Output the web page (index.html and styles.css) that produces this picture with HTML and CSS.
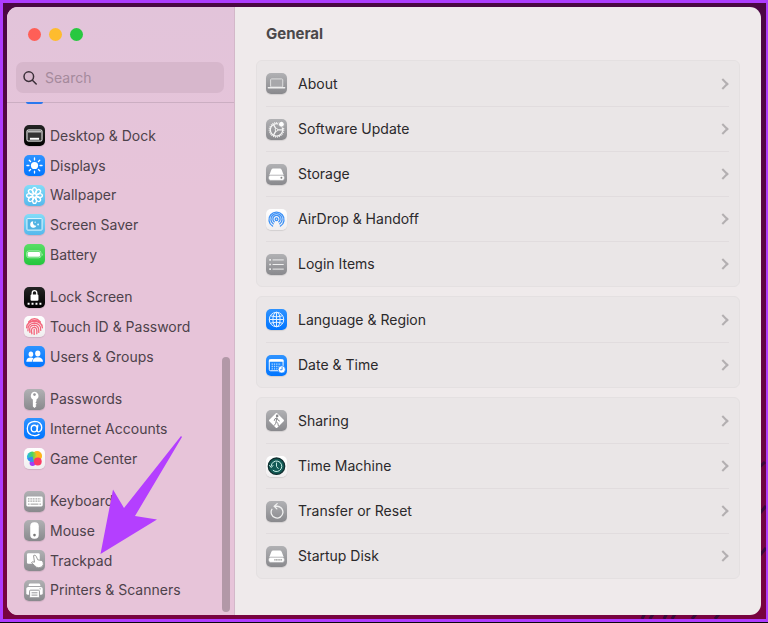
FILE: index.html
```html
<!DOCTYPE html>
<html lang="en">
    <head>
        <meta charset="utf-8">
        <title>General</title>
        <link rel="stylesheet" href="styles.css">
    </head>
    <body>
        <div class="desktop">
            <svg class="streaks" width="140" height="160" viewBox="0 0 140 160" fill="none" stroke="#3a0838" stroke-width="3">
                <path d="M16 160l5-10M24 160l6-10M38 160l5-10M46 160l6-10M66 160l8-10M89 160l8-10M128 103l12-14M128 61l12-14M129 12l10-9"/>
            </svg>
            <div class="window">
                <aside class="sidebar">
                    <div class="sidebar-top">
                        <div class="lights">
                            <button class="light red" aria-label="Close"></button>
                            <button class="light yellow" aria-label="Minimize"></button>
                            <button class="light green" aria-label="Zoom"></button>
                        </div>
                        <label class="search">
                            <svg width="14" height="14" viewBox="0 0 14 14" fill="none" stroke="#3b2f39" stroke-width="1.5" stroke-linecap="round">
                                <circle cx="5.8" cy="5.6" r="4.8"/>
                                <path d="M9.4 9.2l3.8 3.8"/>
                            </svg>
                            <input type="text" placeholder="Search" aria-label="Search">
                        </label>
                    </div>
                    <ul class="nav">
                        <li><a href="#">
                            <svg class="icon black" viewBox="0 0 64 64">
                                <rect x="9" y="15" width="46" height="34" rx="4" fill="#333" stroke="#fff" stroke-width="3"/>
                                <path d="M11 20h42" stroke="#bbb" stroke-width="5"/>
                                <rect x="18" y="39" width="28" height="6" fill="#fff"/>
                            </svg>Desktop &amp; Dock</a></li>
                        <li><a href="#">
                            <svg class="icon blue" viewBox="0 0 64 64">
                                <circle cx="32" cy="32" r="11" fill="#fff"/>
                                <path d="M32 9v6M32 49v6M9 32h6M49 32h6M16 16l4 4M44 44l4 4M48 16l-4 4M20 44l-4 4" stroke="#fff" stroke-width="4" stroke-linecap="round"/>
                            </svg>Displays</a></li>
                        <li><a href="#">
                            <svg class="icon sky" viewBox="0 0 64 64" fill="none" stroke="#fff" stroke-width="4">
                                <circle cx="32" cy="32" r="6"/>
                                <ellipse cx="32" cy="17" rx="6" ry="9"/>
                                <ellipse cx="32" cy="17" rx="6" ry="9" transform="rotate(45 32 32)"/>
                                <ellipse cx="32" cy="17" rx="6" ry="9" transform="rotate(90 32 32)"/>
                                <ellipse cx="32" cy="17" rx="6" ry="9" transform="rotate(135 32 32)"/>
                                <ellipse cx="32" cy="17" rx="6" ry="9" transform="rotate(180 32 32)"/>
                                <ellipse cx="32" cy="17" rx="6" ry="9" transform="rotate(225 32 32)"/>
                                <ellipse cx="32" cy="17" rx="6" ry="9" transform="rotate(270 32 32)"/>
                                <ellipse cx="32" cy="17" rx="6" ry="9" transform="rotate(315 32 32)"/>
                            </svg>Wallpaper</a></li>
                        <li><a href="#">
                            <svg class="icon sky" viewBox="0 0 64 64">
                                <rect x="9" y="14" width="46" height="35" rx="2" fill="#4fb3e3" stroke="#e6f8ff" stroke-width="3"/>
                                <path d="M28 22a10 10 0 1 0 10 14a10 10 0 0 1-10-14z" fill="#fff"/>
                                <circle cx="34" cy="25" r="2" fill="#fff"/>
                                <circle cx="43" cy="32" r="3" fill="#d8f2ff"/>
                            </svg>Screen Saver</a></li>
                        <li><a href="#">
                            <svg class="icon lime" viewBox="0 0 64 64">
                                <rect x="8" y="21" width="44" height="21" rx="7" fill="none" stroke="#d5f8d9" stroke-width="2"/>
                                <rect x="11" y="24" width="38" height="15" rx="4" fill="#fff"/>
                                <path d="M55 28q4 4 0 8z" fill="#d5f8d9"/>
                            </svg>Battery</a></li>
                        <li class="group-start"><a href="#">
                            <svg class="icon black" viewBox="0 0 64 64">
                                <rect x="20" y="23" width="24" height="19" rx="3" fill="#fff"/>
                                <path d="M25 24v-6a7 7 0 0 1 14 0v6" fill="none" stroke="#fff" stroke-width="4"/>
                                <path d="M11 51h6M23 51h6M35 51h6M47 51h6" stroke="#fff" stroke-width="6"/>
                            </svg>Lock Screen</a></li>
                        <li><a href="#">
                            <svg class="icon white" viewBox="0 0 64 64" fill="none" stroke="#f4667c" stroke-width="4" stroke-linecap="round">
                                <path d="M14 18q18-20 36 0M10 27q22-28 45 1M8 36q0-18 23-20q24 1 25 20M12 45q-2-22 20-23q21 2 19 22M18 50q-5-22 14-22q15 2 13 22M24 54q-5-19 8-20q9 2 7 20M31 56v-16"/>
                            </svg>Touch ID &amp; Password</a></li>
                        <li><a href="#">
                            <svg class="icon blue" viewBox="0 0 64 64" fill="#fff">
                                <ellipse cx="21" cy="25" rx="7" ry="8"/>
                                <path d="M7 48q0-13 14-13q5 0 8 3q-5 4-5 10z"/>
                                <ellipse cx="42" cy="23" rx="8" ry="9"/>
                                <path d="M26 48q1-14 16-14t16 14z"/>
                            </svg>Users &amp; Groups</a></li>
                        <li class="group-start"><a href="#">
                            <svg class="icon gray" viewBox="0 0 64 64">
                                <path d="M32 8a13 13 0 0 1 6 24v5l-3 4 4 4-4 4 3 3-6 6-5-5V32a13 13 0 0 1 5-24z" fill="#fff"/>
                                <circle cx="32" cy="17" r="4" fill="#96969a"/>
                            </svg>Passwords</a></li>
                        <li><a href="#">
                            <svg class="icon blue" viewBox="0 0 64 64" fill="none" stroke="#fff" stroke-width="4" stroke-linecap="round">
                                <ellipse cx="31" cy="32" rx="9" ry="10"/>
                                <path d="M42 22l-2 15q0 6 5 5q9-2 9-13q-1-19-22-19q-22 2-22 22t22 22q8 0 14-4"/>
                            </svg>Internet Accounts</a></li>
                        <li><a href="#">
                            <svg class="icon white" viewBox="0 0 64 64">
                                <defs>
                                    <linearGradient id="bubble" x1="0" y1="0" x2="1" y2="0">
                                        <stop offset="0" stop-color="#22b4f5"/>
                                        <stop offset=".5" stop-color="#4bd65b"/>
                                        <stop offset="1" stop-color="#ffc21a"/>
                                    </linearGradient>
                                </defs>
                                <circle cx="26" cy="46" r="9" fill="#a43df5"/>
                                <circle cx="40" cy="24" r="15" fill="#ffb31c"/>
                                <circle cx="25" cy="27" r="16" fill="url(#bubble)"/>
                                <path d="M10 31a16 16 0 0 0 20 11l-4-16z" fill="#3b86f5"/>
                                <circle cx="42" cy="41" r="12" fill="#fb3b63"/>
                            </svg>Game Center</a></li>
                        <li class="group-start"><a href="#">
                            <svg class="icon gray" viewBox="0 0 64 64">
                                <rect x="7" y="17" width="50" height="30" rx="4" fill="#fff"/>
                                <path d="M12 24h40M12 31h40" stroke="#999" stroke-width="4" stroke-dasharray="3 2"/>
                                <path d="M12 40h5M20 40h24M47 40h5" stroke="#999" stroke-width="3"/>
                            </svg>Keyboard</a></li>
                        <li><a href="#">
                            <svg class="icon gray" viewBox="0 0 64 64">
                                <rect x="19" y="7" width="26" height="50" rx="12" fill="#fff"/>
                                <circle cx="32" cy="46" r="4" fill="#777"/>
                            </svg>Mouse</a></li>
                        <li><a href="#">
                            <svg class="icon gray" viewBox="0 0 64 64">
                                <rect x="9" y="10" width="39" height="32" rx="4" fill="#fff"/>
                                <path d="M29 17q5-4 8 2l5 11 12 2q6 3 5 12q-2 10-14 10q-8 0-13-7l-9-8q0-5 9-2z" fill="#fff" stroke="#999" stroke-width="3"/>
                            </svg>Trackpad</a></li>
                        <li><a href="#">
                            <svg class="icon gray" viewBox="0 0 64 64">
                                <path d="M18 11h28q4 0 4 7H14q0-7 4-7z" fill="#fff"/>
                                <path d="M13 21h38q6 0 6 6v14q0 4-6 4H13q-6 0-6-4V27q0-6 6-6z" fill="#fff"/>
                                <rect x="17" y="31" width="30" height="23" rx="3" fill="#fff" stroke="#949498" stroke-width="3"/>
                                <path d="M23 39h18M23 46h18" stroke="#949498" stroke-width="3"/>
                                <circle cx="49" cy="27" r="2" fill="#949498"/>
                            </svg>Printers &amp; Scanners</a></li>
                    </ul>
                    <div class="scrollbar"></div>
                    <svg class="arrow" width="82" height="118" viewBox="0 0 82 118">
                        <path d="M81 0l1 1L35 80l22 3.500L.5 118 13 53.500l11 18.500z" fill="#b43fff"/>
                    </svg>
                </aside>
                <main class="content">
                    <h1>General</h1>
                    <ul class="card">
                        <li><a href="#">
                            <svg class="icon gray" viewBox="0 0 64 64">
                                <rect x="14" y="18" width="37" height="25" rx="3" fill="#a8a8ab" stroke="#dedee0" stroke-width="3"/>
                                <path d="M7 45h50" stroke="#eee" stroke-width="4" stroke-linecap="round"/>
                            </svg>About</a></li>
                        <li><a href="#">
                            <svg class="icon gray" viewBox="0 0 64 64" fill="none" stroke="#f4f4f4">
                                <circle cx="32" cy="33" r="19" stroke-width="4"/>
                                <circle cx="32" cy="33" r="22" stroke-width="4" stroke-dasharray="3 3"/>
                                <path d="M32 33l17 0M32 33l-9-16M32 33l-9 16" stroke-width="4"/>
                                <circle cx="32" cy="33" r="4" fill="#999" stroke-width="3"/>
                                <circle cx="47" cy="16" r="9" fill="#fff" stroke="#a2a2a5" stroke-width="3"/>
                            </svg>Software Update</a></li>
                        <li><a href="#">
                            <svg class="icon gray" viewBox="0 0 64 64">
                                <path d="M22 14h20q4 0 6 4l6 16H10l6-16q2-4 6-4z" fill="#fff"/>
                                <rect x="8" y="34" width="48" height="16" rx="6" fill="#fff" stroke="#a2a2a5" stroke-width="2"/>
                                <circle cx="47" cy="42" r="3" fill="#888"/>
                            </svg>Storage</a></li>
                        <li><a href="#">
                            <svg class="icon white" viewBox="0 0 64 64" fill="none" stroke="#3d91f6" stroke-width="4" stroke-linecap="round">
                                <path d="M20 52a23 23 0 1 1 24 0M22 45a17 17 0 1 1 20 0M25 39a11 11 0 1 1 14 0"/>
                                <circle cx="32" cy="31" r="4"/>
                            </svg>AirDrop &amp; Handoff</a></li>
                        <li><a href="#">
                            <svg class="icon gray" viewBox="0 0 64 64" stroke="#f0f0f0" stroke-width="3">
                                <path d="M20 18h34M20 32h34M20 46h34"/>
                                <path d="M10 18h5M10 32h5M10 46h5" stroke-width="5"/>
                            </svg>Login Items</a></li>
                    </ul>
                    <ul class="card">
                        <li><a href="#">
                            <svg class="icon blue" viewBox="0 0 64 64" fill="none" stroke="#e8f4ff" stroke-width="3">
                                <circle cx="32" cy="32" r="22"/>
                                <ellipse cx="32" cy="32" rx="11" ry="22"/>
                                <path d="M32 10v44M10 32h44M14 21q18 6 36 0M14 43q18-6 36 0"/>
                            </svg>Language &amp; Region</a></li>
                        <li><a href="#">
                            <svg class="icon blue" viewBox="0 0 64 64">
                                <rect x="10" y="14" width="42" height="34" rx="4" fill="none" stroke="#fff" stroke-width="3"/>
                                <path d="M9 17h44" stroke="#fff" stroke-width="7"/>
                                <path d="M17 28h29M17 35h29M17 42h18" stroke="#b5dcff" stroke-width="4" stroke-dasharray="4 3"/>
                                <circle cx="48" cy="44" r="11" fill="#fff" stroke="#0b7cff" stroke-width="2"/>
                                <path d="M49 37v8h-6" fill="none" stroke="#3d91f6" stroke-width="3"/>
                            </svg>Date &amp; Time</a></li>
                    </ul>
                    <ul class="card">
                        <li><a href="#">
                            <svg class="icon gray" viewBox="0 0 64 64">
                                <rect x="15" y="15" width="34" height="34" rx="3" fill="#fff" transform="rotate(45 32 32)"/>
                                <circle cx="34" cy="18" r="4" fill="#88888b"/>
                                <path d="M25 33l2-6 6-3 4 7 5 3M33 24l-2 11 5 6 2 8M31 35l-2 7-5 6" fill="none" stroke="#88888b" stroke-width="3"/>
                            </svg>Sharing</a></li>
                        <li><a href="#">
                            <svg class="icon white" viewBox="0 0 64 64" fill="none" stroke="#c8eee6" stroke-width="3">
                                <circle cx="32" cy="31" r="25" fill="#125a55" stroke="#102f30" stroke-width="4"/>
                                <path d="M16 31a16 16 0 1 1 5 12M10 28l6 7 6-7M32 20v12l6 7"/>
                            </svg>Time Machine</a></li>
                        <li><a href="#">
                            <svg class="icon gray" viewBox="0 0 64 64" fill="none" stroke="#f0f0f0" stroke-width="4" stroke-linecap="round">
                                <path d="M18 25a18 18 0 1 0 14-9h-6M34 8l-9 8 8 8"/>
                            </svg>Transfer or Reset</a></li>
                        <li><a href="#">
                            <svg class="icon gray" viewBox="0 0 64 64">
                                <path d="M22 14h20q4 0 6 4l6 16H10l6-16q2-4 6-4z" fill="#fff"/>
                                <rect x="8" y="34" width="48" height="16" rx="6" fill="#fff" stroke="#a2a2a5" stroke-width="2"/>
                                <path d="M25 42h25" stroke="#999" stroke-width="4" stroke-dasharray="4 1"/>
                            </svg>Startup Disk</a></li>
                    </ul>
                </main>
            </div>
        </div>
    </body>
</html>
```
FILE: styles.css
```css
* {
    box-sizing: border-box;
}
html, body {
    margin: 0;
    padding: 0;
    height: 100%;
}
body {
    background-color: #0c0610;
    padding-bottom: 2px;
    font-family: Inter, "Liberation Sans", sans-serif;
    font-size: 14px;
    line-height: 20px;
}
ul {
    list-style-type: none;
    margin: 0;
    padding: 0;
}
a {
    color: inherit;
    text-decoration: none;
}
.desktop {
    position: relative;
    display: flex;
    min-height: 100%;
    padding: 4px 5px 4px 4px;
    border: 3px solid #ae3cff;
    border-right-width: 2px;
    background: linear-gradient(#4a0743, #780440);
}
.streaks {
    position: absolute;
    right: 0;
    bottom: 0;
}
.window {
    position: relative;
    display: flex;
    flex: 1;
    border-radius: 11px;
    overflow: hidden;
    background-color: #efeaeb;
}

/* sidebar */
.sidebar {
    position: relative;
    display: flex;
    flex-direction: column;
    width: 228px;
    flex-shrink: 0;
    border-right: 1px solid #d3b8c9;
    background: linear-gradient(#e2c4da, #e7c4d9 30%);
    color: #4d424b;
}
.sidebar-top {
    padding: 21px 10px 9px 9px;
    border-bottom: 1px solid #cbaec2;
}
.lights {
    display: flex;
    gap: 8px;
    padding-left: 12px;
    margin-bottom: 21px;
}
.light {
    width: 13px;
    height: 13px;
    padding: 0;
    border: none;
    border-radius: 50%;
}
.red {
    background-color: #ff5f57;
}
.yellow {
    background-color: #febc2e;
}
.green {
    background-color: #28c840;
}
.search {
    display: flex;
    align-items: center;
    gap: 8px;
    height: 31px;
    padding: 0 7px;
    border-radius: 7px;
    background-color: #d7b7cc;
}
.search input {
    flex: 1;
    min-width: 0;
    padding: 0;
    border: none;
    outline: none;
    background: none;
    font: inherit;
}
.search input::placeholder {
    color: #a58a9c;
}
.nav {
    position: relative;
    display: flex;
    flex: 1;
    flex-direction: column;
    padding: 18px 17px 10px;
}
/* bottom edge of the item scrolled under the header */
.nav::before {
    content: "";
    position: absolute;
    top: -1px;
    left: 19px;
    width: 17px;
    height: 2px;
    border-radius: 0 0 3px 3px;
    background-color: #2b78ee;
}
.nav li {
    display: flex;
    flex: 1;
    align-items: center;
}
.nav .group-start {
    margin-top: 13px;
}
.nav a {
    display: flex;
    align-items: center;
    gap: 5px;
}
.scrollbar {
    position: absolute;
    right: 4px;
    bottom: 3px;
    width: 8px;
    height: 42%;
    border-radius: 4px;
    background-color: #b298a7;
}
.arrow {
    position: absolute;
    left: 93px;
    bottom: 61px;
}

/* icons */
.icon {
    width: 21px;
    height: 21px;
    flex-shrink: 0;
    border-radius: 5px;
    box-shadow: 0 1px 1px rgba(0, 0, 0, 0.1);
}
.black {
    background: linear-gradient(#242424, #000);
}
.blue {
    background: linear-gradient(#2f93ff, #0075ff);
}
.sky {
    background: linear-gradient(#83dcf8, #55b8ec);
}
.lime {
    background: linear-gradient(#5ade66, #23c63c);
}
.gray {
    background: linear-gradient(#b1b1b4, #89898d);
}
.white {
    background: linear-gradient(#fff, #f0eeef);
}

/* right side */
.content {
    flex: 1;
    padding: 17px 21px 36px;
    color: #2b292b;
}
h1 {
    margin: 0 0 16px;
    padding-left: 10px;
    font-size: 15px;
    line-height: 20px;
    font-weight: 700;
    color: #4b484a;
}
.card {
    margin-bottom: 9px;
    padding: 0 10px 0 9px;
    border: 1px solid #e4e0e1;
    border-radius: 6px;
    background-color: #eae6e7;
}
.card:last-child {
    margin-bottom: 0;
}
.card li + li {
    border-top: 1px solid #e1dcde;
}
.card li {
    height: 45px;
}
.card a {
    display: flex;
    align-items: center;
    gap: 11px;
    height: 100%;
}
.card a::after {
    content: "";
    width: 6px;
    height: 6px;
    margin-left: auto;
    margin-right: 2px;
    border: solid #b3afb1;
    border-width: 2px 2px 0 0;
    transform: rotate(45deg);
}
```
